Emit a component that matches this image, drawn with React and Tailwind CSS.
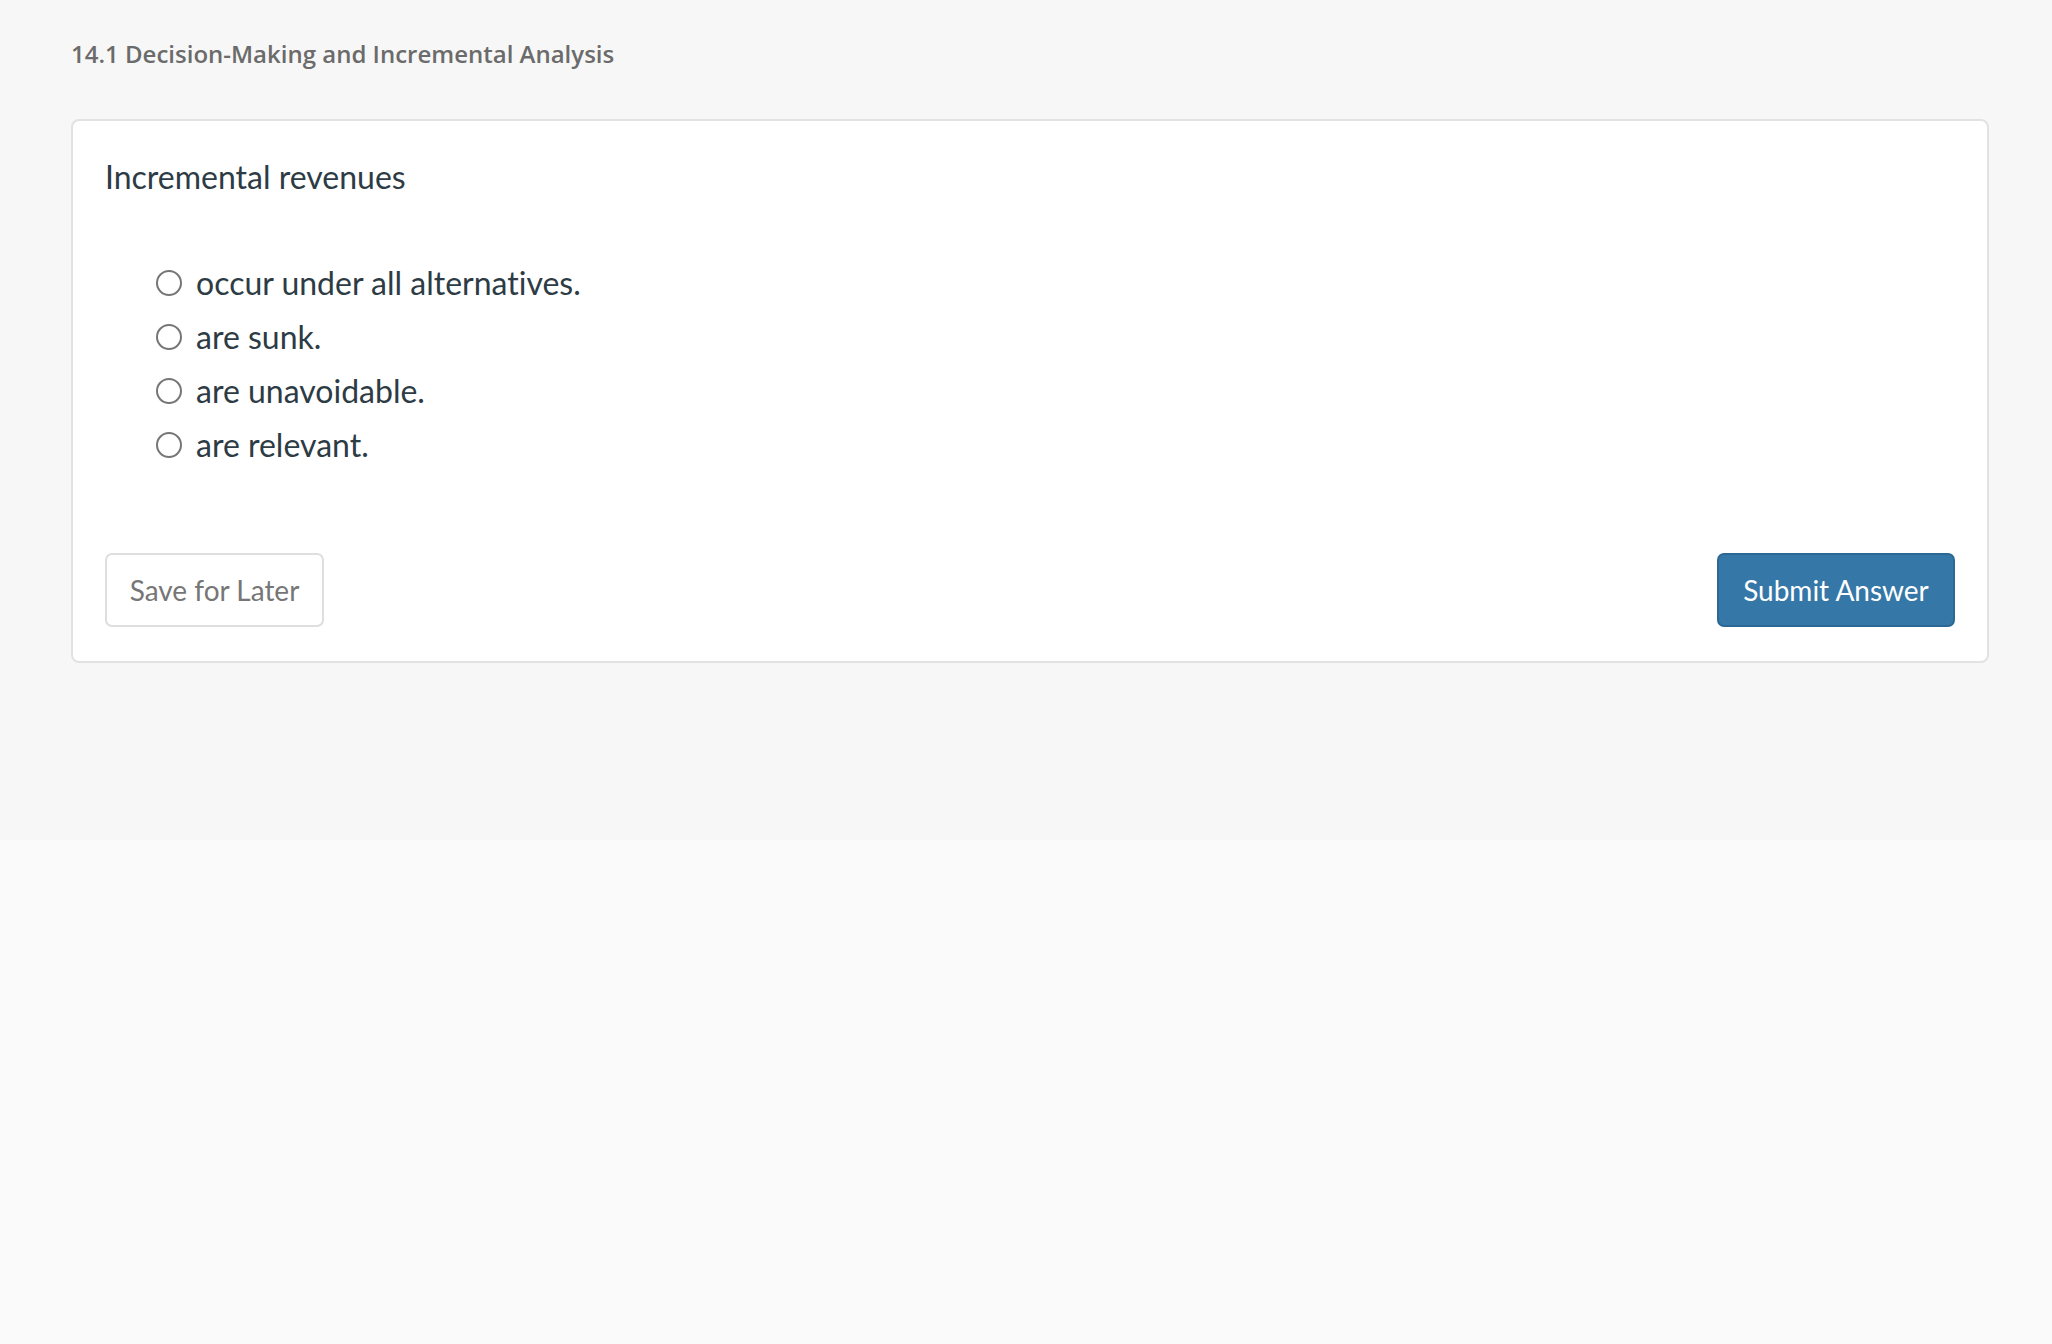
import React from "react";

const options = [
  "occur under all alternatives.",
  "are sunk.",
  "are unavoidable.",
  "are relevant.",
];

export default function App() {
  return (
    <div className="min-h-screen flex flex-col bg-[#fafafa]">
      <div className="h-[840px] bg-[#f7f7f7] pl-[71px] pr-[63px] pt-[37px]">
        <div className="font-['Open_Sans',sans-serif] font-semibold text-[24px] leading-[33px] text-[#6b6b6b]">
          14.1 Decision-Making and Incremental Analysis
        </div>
        <div className="mt-[49px] bg-white border-2 border-[#e2e2e2] rounded-[8px] pl-[32px] pr-[32px] pt-[36px] pb-[34px] font-['Lato',sans-serif] [font-variant-ligatures:none]">
          <div className="text-[32px] leading-[40px] text-[#2d3b45]">Incremental revenues</div>
          <div className="mt-[59px] pl-[51px] flex flex-col">
            {options.map((o) => (
              <label key={o} className="flex items-center h-[54px] gap-[14px] text-[32px] text-[#2d3b45]">
                <span className="w-[26px] h-[26px] rounded-full border-2 border-[#767676] bg-white shrink-0" />
                <span>{o}</span>
              </label>
            ))}
          </div>
          <div className="mt-[81px] flex justify-between">
            <button className="h-[74px] w-[219px] border-2 border-[#dedede] rounded-[7px] bg-white text-[28px] text-[#767676]">
              Save for Later
            </button>
            <button className="h-[74px] w-[238px] border-2 border-[#2b6896] rounded-[7px] bg-[#3577a7] text-[28px] text-white">
              Submit Answer
            </button>
          </div>
        </div>
      </div>
      <div className="flex-1" />
    </div>
  );
}
